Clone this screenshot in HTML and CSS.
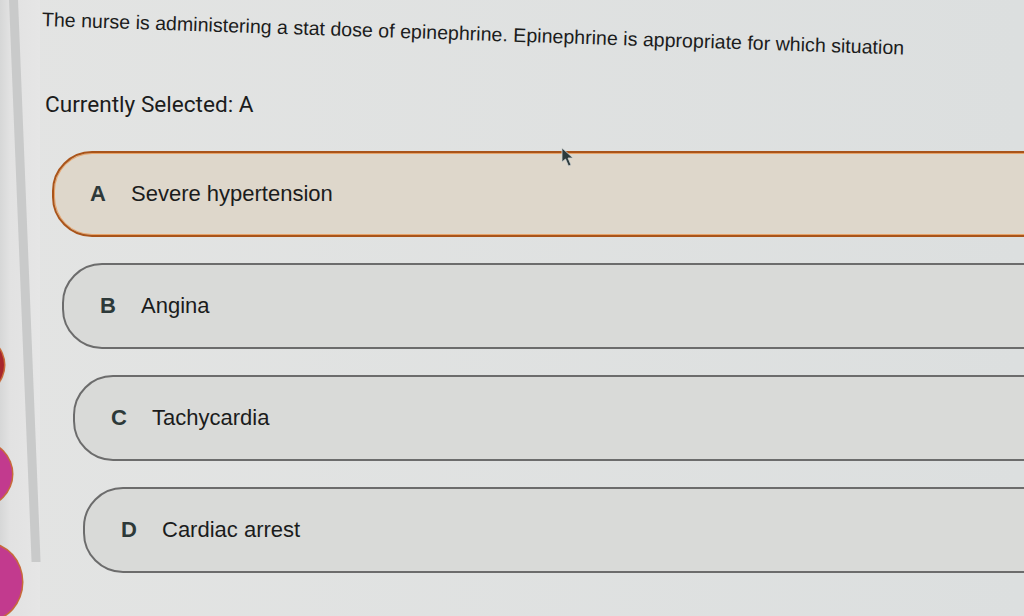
FILE: index.html
```html
<!DOCTYPE html>
<html lang="en">
  <head>
    <meta charset="UTF-8" />
    <meta name="viewport" content="width=device-width, initial-scale=1.0" />
    <title>Question</title>
    <link rel="stylesheet" href="styles.css">
  </head>
  <body>
    <div class="screen">
      <div class="rail">
        <div class="rail-bar"></div>
        <div class="dot dot-red"></div>
        <div class="dot dot-one"></div>
        <div class="dot dot-two"></div>
      </div>
      <div class="quiz">
        <p class="question">The nurse is administering a stat dose of epinephrine. Epinephrine is appropriate for which situation</p>
        <p class="selected">Currently Selected: A</p>
        <div class="options">
          <div class="option active">
            <span class="letter">A</span>
            <span class="answer">Severe hypertension</span>
          </div>
          <div class="option">
            <span class="letter">B</span>
            <span class="answer">Angina</span>
          </div>
          <div class="option">
            <span class="letter">C</span>
            <span class="answer">Tachycardia</span>
          </div>
          <div class="option">
            <span class="letter">D</span>
            <span class="answer">Cardiac arrest</span>
          </div>
        </div>
      </div>
      <!-- mouse pointer -->
      <svg class="pointer" width="14" height="22" viewBox="0 0 14 22">
        <path d="M1 1 L1 15 L4.5 12 L7.5 19 L10 18 L7 11 L12 11 Z" fill="#2c3a3c" stroke="#cfd3d2" stroke-width="0.8" />
      </svg>
    </div>
  </body>
</html>
```

FILE: styles.css
```css
/* CSS Styles */
body {
  margin: 0;
  font-family: "Liberation Sans", Arial, sans-serif;
  background: linear-gradient(to right, #e3e4e3, #dcdfdf);
  color: #1b1c1c;
  overflow: hidden;
}

.screen {
  display: flex;
  height: 616px;
  position: relative;
}

/* left edge of the window */
.rail {
  width: 40px;
  flex-shrink: 0;
  position: relative;
  background: linear-gradient(to right, #d6d7d7 0, #e2e2e2 10px, #e6e6e6 40px);
}

.rail-bar {
  position: absolute;
  top: 0;
  left: 9px;
  width: 9px;
  height: 562px;
  background: #c9caca;
  transform: skewX(2.3deg);
  transform-origin: top left;
}

.dot {
  position: absolute;
  border-radius: 50%;
  background: #c23a8e;
  box-shadow: 0 0 0 1.5px #c76a3a;
}

.dot-red {
  top: 335px;
  left: -58px;
  width: 62px;
  height: 60px;
  background: #a8262c;
}

.dot-one {
  top: 442px;
  left: -52px;
  width: 64px;
  height: 64px;
}

.dot-two {
  top: 544px;
  left: -46px;
  width: 68px;
  height: 76px;
}

.quiz {
  flex: 1;
  padding: 6px 0 0 2px;
}

.question {
  margin: 0;
  font-size: 19.6px;
  line-height: 26px;
  white-space: nowrap;
  transform: rotate(1.9deg);
  transform-origin: left center;
}

.selected {
  margin: 59px 0 0 3px;
  font-family: Roboto, "Liberation Sans", sans-serif;
  font-size: 22.6px;
  line-height: 28px;
}

.options {
  display: flex;
  flex-direction: column;
  gap: 26px;
  margin: 32px -80px 0 10px;
}

.option {
  display: flex;
  align-items: center;
  gap: 23px;
  height: 82px;
  padding-left: 36px;
  border: 2px solid #6c6c6c;
  border-radius: 40px;
  background: #d9dad8;
}

.option:nth-child(2) {
  margin-left: 10px;
}

.option:nth-child(3) {
  margin-left: 21px;
}

.option:nth-child(4) {
  margin-left: 31px;
}

.option.active {
  border: 2.5px solid #a9541a;
  background: #ded7cb;
  box-shadow: inset 0 0 0 1px #e6a36a;
}

.letter {
  font-size: 22px;
  font-weight: bold;
  color: #2d3939;
  width: 18px;
}

.answer {
  font-size: 22px;
}

.pointer {
  position: absolute;
  top: 147px;
  left: 561px;
}
```
